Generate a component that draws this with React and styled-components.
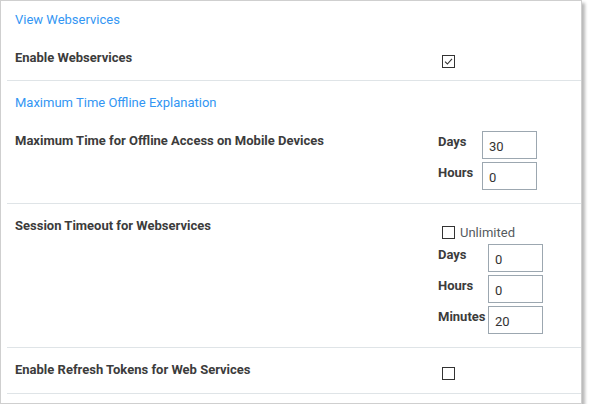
import React from "react";
import styled, { createGlobalStyle } from "styled-components";

const GlobalStyle = createGlobalStyle`
  html, body {
    margin: 0;
    padding: 0;
    background: #ffffff;
  }
  body {
    font-family: Roboto, "Liberation Sans", Arial, sans-serif;
    font-size: 13px;
    color: #3c3c3c;
  }
`;

const Panel = styled.div`
  width: 580px;
  border: 1px solid #cfcfcf;
  background: #ffffff;
  box-shadow: 3px 3px 3px rgba(0, 0, 0, 0.28);
  padding-bottom: 9px;
`;

const Section = styled.div`
  margin-left: 6px;
  padding: ${p => (p.first ? "9px 0 12px" : "12px 0 13px")} 8px;
  border-bottom: 1px solid #dfe4e7;
`;

const HelpLink = styled.a`
  display: block;
  line-height: 20px;
  font-size: 13px;
  color: #3396f3;
  text-decoration: none;
  margin-bottom: 18px;
`;

const Row = styled.div`
  display: grid;
  grid-template-columns: 1fr 143px;
`;

const Label = styled.div`
  font-weight: bold;
  font-size: 13px;
  line-height: 16px;
  padding-top: 2px;
  color: #3c3c3c;
`;

const Controls = styled.div`
  display: flex;
  flex-direction: column;
  align-items: flex-start;
`;

const Box = styled.span`
  display: inline-flex;
  align-items: center;
  justify-content: center;
  width: 11px;
  height: 11px;
  border: 1px solid #333333;
  background: #ffffff;
  margin: ${p => p.$top ?? 7}px 0 0 4px;
  flex: none;
`;

const Check = ({ checked, top }) => (
  <Box $top={top}>
    {checked && (
      <svg width="9" height="9" viewBox="0 0 9 9">
        <path d="M1 4.6 L3.4 7 L8 1.8" fill="none" stroke="#333" strokeWidth="1.1" />
      </svg>
    )}
  </Box>
);

const CheckLine = styled.label`
  display: flex;
  align-items: center;
  height: 16px;
  margin-top: 8px;
  margin-bottom: 4px;
  font-size: 13px;
  color: #555a5e;
  gap: 5px;
`;

const TimeGrid = styled.div`
  display: grid;
  grid-template-columns: ${p => p.$labelWidth}px 55px;
  row-gap: 3px;
`;

const TimeLabel = styled.span`
  font-weight: bold;
  font-size: 13px;
  line-height: 16px;
  padding-top: 3px;
  color: #3c3c3c;
`;

const Field = styled.input`
  box-sizing: border-box;
  width: 55px;
  height: 28px;
  border: 1px solid #9ca7b0;
  border-radius: 0;
  padding: 3px 0 0 6px;
  font-family: Roboto, "Liberation Sans", Arial, sans-serif;
  font-size: 13px;
  color: #333333;
  outline: none;
`;

function TimeFields({ fields, labelWidth }) {
  return (
    <TimeGrid $labelWidth={labelWidth}>
      {fields.map(([name, value]) => (
        <React.Fragment key={name}>
          <TimeLabel>{name}</TimeLabel>
          <Field defaultValue={value} />
        </React.Fragment>
      ))}
    </TimeGrid>
  );
}

export default function App() {
  return (
    <>
      <GlobalStyle />
      <Panel>
        <Section first>
          <HelpLink href="#">View Webservices</HelpLink>
          <Row>
            <Label>Enable Webservices</Label>
            <Controls>
              <Check checked />
            </Controls>
          </Row>
        </Section>

        <Section>
          <HelpLink href="#">Maximum Time Offline Explanation</HelpLink>
          <Row>
            <Label>Maximum Time for Offline Access on Mobile Devices</Label>
            <Controls>
              <TimeFields labelWidth={44} fields={[["Days", "30"], ["Hours", "0"]]} />
            </Controls>
          </Row>
        </Section>

        <Section>
          <Row>
            <Label>Session Timeout for Webservices</Label>
            <Controls>
              <CheckLine>
                <Check top={0} />
                Unlimited
              </CheckLine>
              <TimeFields
                labelWidth={50}
                fields={[["Days", "0"], ["Hours", "0"], ["Minutes", "20"]]}
              />
            </Controls>
          </Row>
        </Section>

        <Section>
          <Row>
            <Label>Enable Refresh Tokens for Web Services</Label>
            <Controls>
              <Check />
            </Controls>
          </Row>
        </Section>
      </Panel>
    </>
  );
}
